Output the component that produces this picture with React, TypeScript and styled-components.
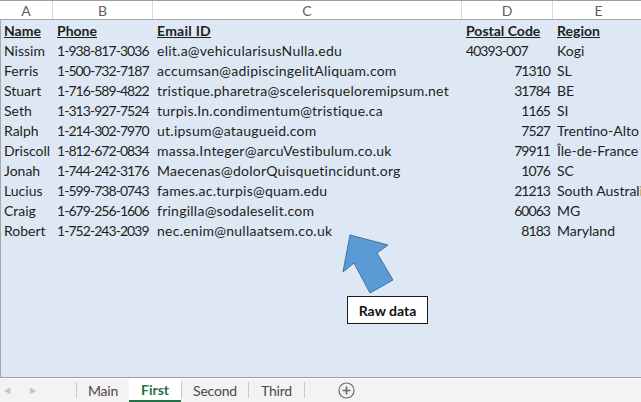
import React from "react";
import styled, { createGlobalStyle } from "styled-components";

const Global = createGlobalStyle`
  html, body { margin: 0; padding: 0; }
  body { width: 641px; height: 402px; overflow: hidden; background: #fff; }
  * { box-sizing: border-box; }
`;

const COLS = "53px 100px 309px 91px 92px";

const Sheet = styled.div`
  position: relative;
  width: 641px;
  height: 402px;
  display: flex;
  flex-direction: column;
  overflow: hidden;
  font-family: Lato, "Open Sans", sans-serif;
  font-size: 14px;
  color: #1e1e1e;
`;

const ColHeader = styled.div`
  display: grid;
  grid-template-columns: ${COLS};
  height: 20px;
  border-top: 1px solid #9e9e9e;
  border-bottom: 1px solid #a9a9a9;
  background: #fff;
`;

const ColLetter = styled.div`
  display: flex;
  align-items: center;
  justify-content: center;
  color: #5e5e5e;
  font-size: 14px;
  border-right: 1px solid #dadada;
`;

const DataArea = styled.div`
  flex: 1;
  background: #dde8f4;
  border-left: 1px solid #a9a9a9;
  border-bottom: 1px solid #9aa0a8;
  display: flex;
  flex-direction: column;
`;

const Row = styled.div`
  display: grid;
  grid-template-columns: ${COLS};
  height: 20px;
  align-items: center;
  white-space: nowrap;
`;

const Cell = styled.div<{ $right?: boolean; $bold?: boolean; $num?: boolean; $wide?: boolean }>`
  padding: 0 4px 0 3px;
  text-align: ${(p) => (p.$right ? "right" : "left")};
  font-weight: ${(p) => (p.$bold ? 700 : 400)};
  text-decoration: ${(p) => (p.$bold ? "underline" : "none")};
  letter-spacing: ${(p) => (p.$num ? "-0.95px" : p.$wide ? "0.25px" : "0")};
  overflow: visible;
`;

const TabBar = styled.div`
  height: 24px;
  background: #f4f3f2;
  border-top: 1px solid #fbfbfb;
  display: flex;
  align-items: stretch;
  font-size: 14px;
`;

const NavArrows = styled.div`
  width: 77px;
  display: flex;
  align-items: center;
  gap: 20px;
  padding-left: 4px;
  color: #c4c4c4;
  font-size: 8px;
  border-right: 1px solid #c9c9c9;
  margin: 3px 0 4px;
`;

const Tab = styled.div<{ $active?: boolean; $w: number }>`
  width: ${(p) => p.$w}px;
  display: flex;
  align-items: center;
  justify-content: center;
  color: ${(p) => (p.$active ? "#217346" : "#4a4a4a")};
  font-weight: ${(p) => (p.$active ? 700 : 400)};
  letter-spacing: ${(p) => (p.$active ? "0" : "-0.2px")};
  background: ${(p) => (p.$active ? "#fff" : "transparent")};
  border-bottom: ${(p) => (p.$active ? "2px solid #217346" : "none")};
`;

const TabSep = styled.div`
  width: 1px;
  background: #c9c9c9;
  margin: 3px 0 4px;
`;

const AddBtn = styled.div`
  margin-left: 33px;
  display: flex;
  align-items: center;
`;

const Callout = styled.div`
  position: absolute;
  left: 347px;
  top: 296px;
  width: 81px;
  height: 28px;
  background: #fff;
  border: 1px solid #1a1a1a;
  display: flex;
  align-items: center;
  justify-content: center;
  font-weight: 700;
  font-size: 14px;
  color: #111;
`;

const ArrowSvg = styled.svg`
  position: absolute;
  left: 0;
  top: 0;
  pointer-events: none;
`;

const rows: [string, string, string, string, boolean, string][] = [
  ["Nissim", "1-938-817-3036", "elit.a@vehicularisusNulla.edu", "40393-007", false, "Kogi"],
  ["Ferris", "1-500-732-7187", "accumsan@adipiscingelitAliquam.com", "71310", true, "SL"],
  ["Stuart", "1-716-589-4822", "tristique.pharetra@scelerisqueloremipsum.net", "31784", true, "BE"],
  ["Seth", "1-313-927-7524", "turpis.In.condimentum@tristique.ca", "1165", true, "SI"],
  ["Ralph", "1-214-302-7970", "ut.ipsum@ataugueid.com", "7527", true, "Trentino-Alto Adige"],
  ["Driscoll", "1-812-672-0834", "massa.Integer@arcuVestibulum.co.uk", "79911", true, "Île-de-France"],
  ["Jonah", "1-744-242-3176", "Maecenas@dolorQuisquetincidunt.org", "1076", true, "SC"],
  ["Lucius", "1-599-738-0743", "fames.ac.turpis@quam.edu", "21213", true, "South Australia"],
  ["Craig", "1-679-256-1606", "fringilla@sodaleselit.com", "60063", true, "MG"],
  ["Robert", "1-752-243-2039", "nec.enim@nullaatsem.co.uk", "8183", true, "Maryland"],
];

export default function App() {
  return (
    <Sheet>
      <Global />
      <ColHeader>
        {["A", "B", "C", "D", "E"].map((l) => (
          <ColLetter key={l}>{l}</ColLetter>
        ))}
      </ColHeader>
      <DataArea>
        <Row>
          <Cell $bold>Name</Cell>
          <Cell $bold>Phone</Cell>
          <Cell $bold $wide>Email ID</Cell>
          <Cell $bold>Postal Code</Cell>
          <Cell $bold>Region</Cell>
        </Row>
        {rows.map((r) => (
          <Row key={r[0]}>
            <Cell>{r[0]}</Cell>
            <Cell $num>{r[1]}</Cell>
            <Cell $wide>{r[2]}</Cell>
            <Cell $right={r[4]} $num>{r[3]}</Cell>
            <Cell>{r[5]}</Cell>
          </Row>
        ))}
      </DataArea>
      <TabBar>
        <NavArrows>
          <span>◀</span>
          <span>▶</span>
        </NavArrows>
        <Tab $w={52}>Main</Tab>
        <Tab $w={52} $active>First</Tab>
        <TabSep />
        <Tab $w={66}>Second</Tab>
        <TabSep />
        <Tab $w={55}>Third</Tab>
        <TabSep />
        <AddBtn>
          <svg width="17" height="17" viewBox="0 0 17 17">
            <circle cx="8.5" cy="8.5" r="7.5" fill="none" stroke="#6a6a6a" strokeWidth="1.2" />
            <path d="M8.5 4.5v8M4.5 8.5h8" stroke="#6a6a6a" strokeWidth="1.6" />
          </svg>
        </AddBtn>
      </TabBar>
      <ArrowSvg width="641" height="402">
        <polygon
          points="350,235 388,245 377,253 393,280 370,293 354,263 343,272"
          fill="#5b9bd5"
          stroke="#41719c"
          strokeWidth="1"
        />
      </ArrowSvg>
      <Callout>Raw data</Callout>
    </Sheet>
  );
}
